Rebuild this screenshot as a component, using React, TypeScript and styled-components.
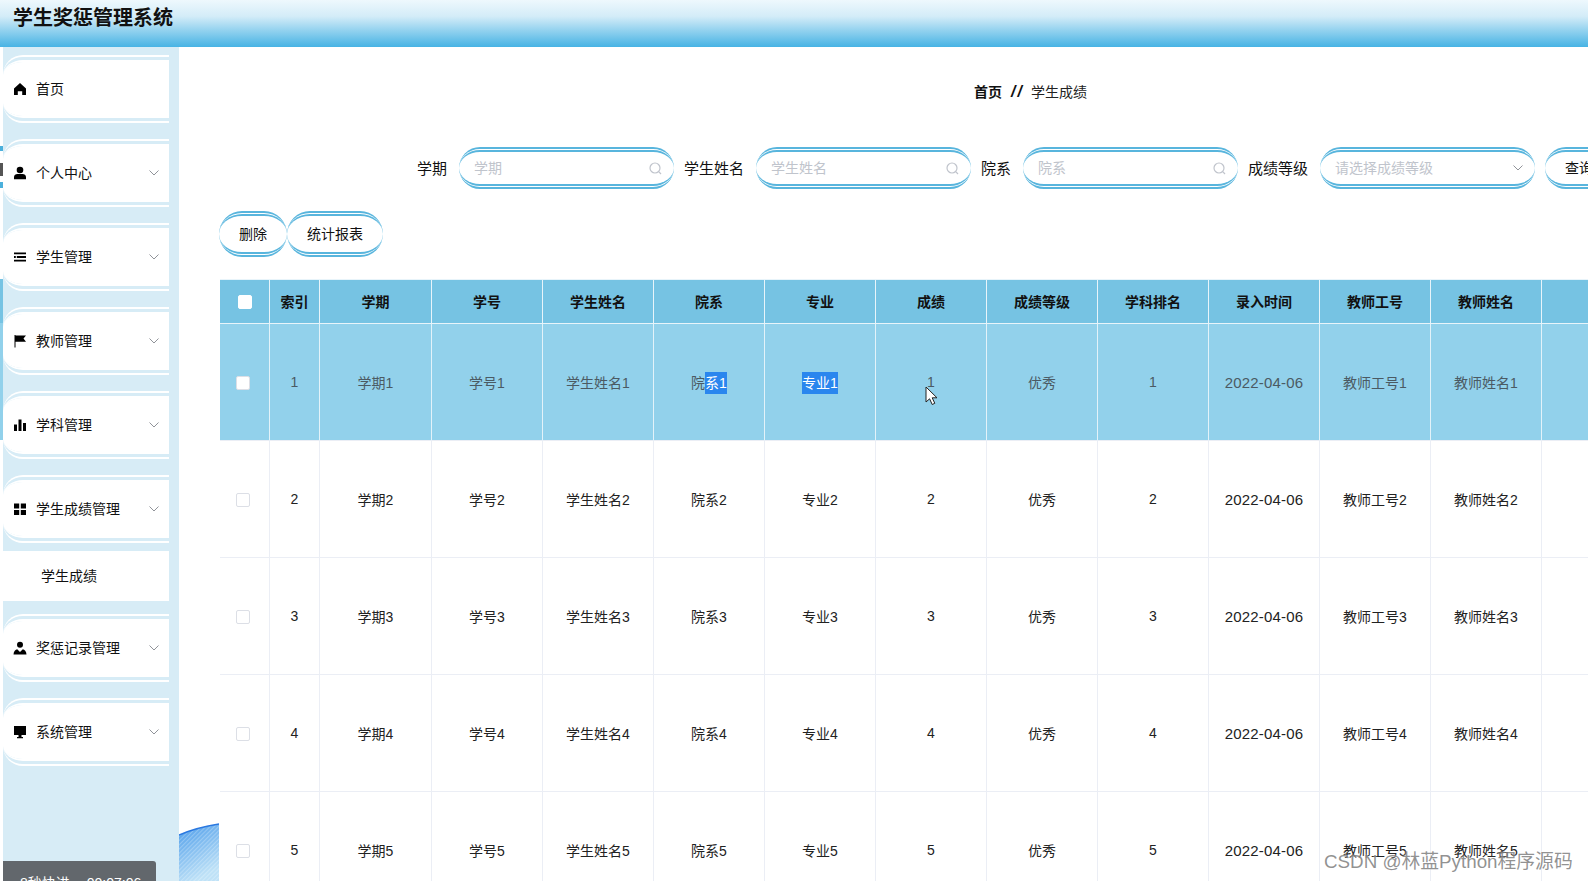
import React from "react";
import styled, { createGlobalStyle } from "styled-components";

const GlobalStyle = createGlobalStyle`
  html, body {
    margin: 0;
    padding: 0;
    background: #fff;
  }
  body {
    font-family: "Liberation Sans", "Noto Sans CJK SC", sans-serif;
    font-size: 14px;
    color: #000;
  }
  * {
    box-sizing: border-box;
  }
`;

const Page = styled.div`
  position: relative;
  display: flex;
  flex-direction: column;
  width: 1588px;
  height: 881px;
  overflow: hidden;
  background: #fff;
`;

const Header = styled.header`
  flex: none;
  height: 47px;
  padding: 0 13px;
  background: linear-gradient(180deg, #eef8fd 0%, #d3ecf8 35%, #47b3e4 100%);
`;

const Title = styled.div`
  font-size: 20px;
  line-height: 36px;
  font-weight: 700;
  color: #111;
`;

const Body = styled.div`
  flex: 1;
  display: flex;
  min-height: 0;
`;

const LeftStrip = styled.div`
  flex: none;
  width: 3px;
  display: flex;
  flex-direction: column;
`;

const Notch = styled.div<{ $h: number; $c: string }>`
  flex: none;
  height: ${(p) => p.$h}px;
  background: ${(p) => p.$c};
`;

const Sidebar = styled.aside`
  position: relative;
  flex: none;
  width: 176px;
  padding: 8px 10px 0 0;
  background: #d7ecf6;
`;

const MenuItem = styled.div`
  display: flex;
  align-items: center;
  height: 68px;
  margin-bottom: 16px;
  padding: 0 10px;
  background: #fff;
  background-clip: padding-box;
  border-style: double;
  border-color: #fff;
  border-width: 7px 0;
  border-radius: 20px 0 0 20px;
`;

const OpenItem = styled(MenuItem)`
  margin-bottom: 8px;
`;

const SubItem = styled.div`
  display: flex;
  align-items: center;
  height: 50px;
  margin-bottom: 13px;
  padding: 0 0 2px 38px;
  background: #fff;
  color: #111;
`;

const MenuIcon = styled.svg`
  flex: none;
  width: 14px;
  height: 14px;
  margin-right: 9px;
  fill: #000;
`;

const MenuLabel = styled.span`
  flex: 1;
  margin-top: -2px;
  font-size: 14px;
  color: #111;
`;

const Chevron = styled.svg`
  flex: none;
  width: 10px;
  height: 6px;
  fill: none;
  stroke: #909399;
  stroke-width: 1;
`;

const PlayerBar = styled.div`
  position: absolute;
  left: 0;
  bottom: 0;
  width: 153px;
  height: 20px;
  display: flex;
  gap: 17px;
  padding: 13px 0 0 17px;
  overflow: hidden;
  background: #62676c;
  border-radius: 0 3px 0 0;
  font-size: 14px;
  line-height: 18px;
  color: #fff;
`;

const Main = styled.main`
  position: relative;
  flex: none;
  width: 1702px;
  padding: 0 40px 0 41px;
`;

const Wave = styled.svg`
  position: absolute;
  left: 0;
  bottom: 0;
  width: 40px;
  height: 58px;
`;

const Breadcrumb = styled.nav`
  display: flex;
  justify-content: center;
  align-items: center;
  height: 22px;
  margin: 33px 0 0;
  font-size: 14px;
`;

const CrumbHome = styled.span`
  font-weight: 700;
  color: #111;
`;

const CrumbSep = styled.span`
  margin: 2px 7px 0 9px;
  font-size: 16px;
  line-height: 16px;
  font-weight: 700;
  font-style: italic;
  letter-spacing: 2px;
  color: #111;
`;

const CrumbCurrent = styled.span`
  color: #222;
`;

const SearchRow = styled.form`
  display: flex;
  align-items: center;
  margin: 45px 0 22px;
  padding-left: 197px;
`;

const FieldLabel = styled.label`
  flex: none;
  margin: -2px 12px 0 0;
  font-size: 15px;
  white-space: nowrap;
  color: #111;
`;

const Field = styled.div`
  flex: none;
  display: flex;
  align-items: center;
  width: 215px;
  height: 42px;
  margin-right: 10px;
  padding: 0 12px 0 15px;
  background: #fff;
  border-style: double;
  border-color: #58b5dd;
  border-width: 5px 0;
  border-radius: 21px;
`;

const FieldInput = styled.input`
  flex: 1;
  min-width: 0;
  padding: 0;
  border: 0;
  outline: 0;
  background: transparent;
  font-family: inherit;
  font-size: 14px;
  &::placeholder {
    color: #c0c4cc;
  }
`;

const FieldIcon = styled.svg`
  flex: none;
  width: 13px;
  height: 13px;
  fill: none;
  stroke: #c0c4cc;
  stroke-width: 1.2;
`;

const PillButton = styled.button`
  flex: none;
  height: 46px;
  padding: 0 20px 2px;
  background: #fff;
  border-style: double;
  border-color: #58b5dd;
  border-width: 5px 0;
  border-radius: 23px;
  font-family: inherit;
  font-size: 14px;
  color: #111;
  white-space: nowrap;
`;

const SearchButton = styled(PillButton)`
  height: 42px;
  border-radius: 21px;
`;

const Actions = styled.div`
  display: flex;
  margin-left: -1px;
`;

const Table = styled.table`
  margin-top: 22px;
  width: 1433px;
  table-layout: fixed;
  border-collapse: separate;
  border-spacing: 0;
`;

const HeadCell = styled.th`
  height: 45px;
  padding: 0 0 2px;
  background: #76c3e3;
  border-right: 1px solid #e8f4fa;
  border-bottom: 1px solid #e8f4fa;
  border-top: 1px solid #e8f4fa;
  font-size: 14px;
  font-weight: 700;
  color: #111;
`;

const Cell = styled.td<{ $selected?: boolean }>`
  height: 117px;
  padding: 0;
  text-align: center;
  background: ${(p) => (p.$selected ? "#92d1eb" : "#fff")};
  border-right: 1px solid ${(p) => (p.$selected ? "#e3f2f9" : "#ebeef5")};
  border-bottom: 1px solid #ebeef5;
  font-size: 14px;
  color: ${(p) => (p.$selected ? "#4b5a63" : "#222")};
`;

const DateText = styled.span`
  font-size: 15px;
  letter-spacing: 0.2px;
`;

const Selected = styled.span`
  padding: 3px 0;
  background: #2a86ee;
  color: #fff;
`;

const Check = styled.span<{ $head?: boolean }>`
  display: inline-block;
  width: 14px;
  height: 14px;
  vertical-align: middle;
  margin-left: ${(p) => (p.$head ? "0" : "-3px")};
  background: #fff;
  border: 1px solid ${(p) => (p.$head ? "#fff" : "#dcdfe6")};
  border-radius: 2px;
`;

const Cursor = styled.svg`
  position: absolute;
  left: 925px;
  top: 386px;
  width: 13px;
  height: 20px;
`;

const Watermark = styled.div`
  position: absolute;
  left: 1324px;
  top: 849px;
  font-size: 18.8px;
  line-height: 26px;
  white-space: nowrap;
  color: rgba(110, 110, 110, 0.75);
  text-shadow: 0 0 2px rgba(255, 255, 255, 0.8);
`;

const menus = [
  { label: "首页", icon: "home", arrow: false },
  { label: "个人中心", icon: "user", arrow: true },
  { label: "学生管理", icon: "list", arrow: true },
  { label: "教师管理", icon: "flag", arrow: true },
  { label: "学科管理", icon: "chart", arrow: true },
];

const icons: Record<string, React.ReactNode> = {
  home: <path d="M7 1 13 6.600V13H9.200V9.200H4.800V13H1V6.600Z" />,
  user: (
    <>
      <circle cx="7" cy="4" r="3.300" />
      <path d="M1 13.200V11c0-1.900 1.700-3 3.400-3h5.200c1.700 0 3.400 1.100 3.400 3v2.200Z" />
    </>
  ),
  list: <path d="M1 2.500h12v1.800H1ZM3.800 6.100H13v1.800H3.800ZM1 9.700h12v1.800H1ZM1 6.100h1.800v1.800H1Z" />,
  flag: <path d="M1.500 1h1v12.500h-1ZM2.500 1.500H13L10.500 4.500 13 7.800H2.500Z" />,
  chart: <path d="M1 6.500h3V13H1ZM5.500 1.500h3V13h-3ZM10 5h3v8h-3Z" />,
  grid: <path d="M1 1.500h5.200v5H1ZM7.800 1.500H13v5H7.800ZM1 8h5.200v5H1ZM7.800 8H13v5H7.800Z" />,
  custom: (
    <>
      <circle cx="7" cy="3.800" r="3" />
      <path d="M.5 13.500c.2-3.500 2-5 3.700-5.300L7 11l2.800-2.800c1.700.3 3.500 1.800 3.700 5.300Z" />
    </>
  ),
  monitor: <path d="M1 1h12v9H8.500v2H10v1.300H4V12h1.500v-2H1Z" />,
};

const Arrow = () => (
  <Chevron viewBox="0 0 10 6">
    <path d="M.5.500 5 5 9.500.500" />
  </Chevron>
);

const SearchIcon = () => (
  <FieldIcon viewBox="0 0 13 13">
    <circle cx="6" cy="6" r="5" />
    <path d="M9.700 9.700 12 12" />
  </FieldIcon>
);

const Menu = ({ label, icon, arrow }: { label: string; icon: string; arrow: boolean }) => (
  <MenuItem>
    <MenuIcon viewBox="0 0 14 14">{icons[icon]}</MenuIcon>
    <MenuLabel>{label}</MenuLabel>
    {arrow && <Arrow />}
  </MenuItem>
);

const columns = ["学期", "学号", "学生姓名", "院系", "专业", "成绩", "成绩等级", "学科排名", "录入时间", "教师工号", "教师姓名", ""];
const rows = [1, 2, 3, 4, 5];

const cellText = (n: number): React.ReactNode[] => [
  `学期${n}`,
  `学号${n}`,
  `学生姓名${n}`,
  `院系${n}`,
  `专业${n}`,
  `${n}`,
  "优秀",
  `${n}`,
  <DateText>2022-04-06</DateText>,
  `教师工号${n}`,
  `教师姓名${n}`,
  "",
];

const App = () => {
  return (
    <Page>
      <GlobalStyle />
      <Header>
        <Title>学生奖惩管理系统</Title>
      </Header>
      <Body>
        <LeftStrip>
          <Notch $h={99} $c="#fff" />
          <Notch $h={5} $c="#4bb0dc" />
          <Notch $h={12} $c="#fff" />
          <Notch $h={13} $c="#555" />
          <Notch $h={6} $c="#fff" />
          <Notch $h={6} $c="#4bb0dc" />
          <Notch $h={91} $c="#fff" />
          <Notch $h={44} $c="#76c3e3" />
          <Notch $h={117} $c="#92d1eb" />
        </LeftStrip>
        <Sidebar>
          {menus.map((m) => (
            <Menu key={m.label} {...m} />
          ))}
          <OpenItem>
            <MenuIcon viewBox="0 0 14 14">{icons.grid}</MenuIcon>
            <MenuLabel>学生成绩管理</MenuLabel>
            <Arrow />
          </OpenItem>
          <SubItem>学生成绩</SubItem>
          <Menu label="奖惩记录管理" icon="custom" arrow />
          <Menu label="系统管理" icon="monitor" arrow />
          <PlayerBar>
            <span>8秒快进</span>
            <span>00:07:06</span>
          </PlayerBar>
        </Sidebar>
        <Main>
          <Wave viewBox="0 0 40 58">
            <defs>
              <linearGradient id="waveFill" x1="0" y1="0" x2="0.4" y2="1">
                <stop offset="0" stopColor="#4a9bea" />
                <stop offset="1" stopColor="#bfe2f7" />
              </linearGradient>
              <pattern id="waveHatch" width="3" height="3" patternUnits="userSpaceOnUse" patternTransform="rotate(45)">
                <rect width="1" height="3" fill="#fff" fillOpacity="0.25" />
              </pattern>
            </defs>
            <path d="M0 12C14 6 27 3 40 1V58H0Z" fill="url(#waveFill)" />
            <path d="M0 12C14 6 27 3 40 1V58H0Z" fill="url(#waveHatch)" />
            <path d="M0 12C14 6 27 3 40 1" fill="none" stroke="#2a78e0" strokeWidth="1.500" />
          </Wave>
          <Breadcrumb>
            <CrumbHome>首页</CrumbHome>
            <CrumbSep>//</CrumbSep>
            <CrumbCurrent>学生成绩</CrumbCurrent>
          </Breadcrumb>
          <SearchRow>
            <FieldLabel>学期</FieldLabel>
            <Field>
              <FieldInput placeholder="学期" readOnly />
              <SearchIcon />
            </Field>
            <FieldLabel>学生姓名</FieldLabel>
            <Field>
              <FieldInput placeholder="学生姓名" readOnly />
              <SearchIcon />
            </Field>
            <FieldLabel>院系</FieldLabel>
            <Field>
              <FieldInput placeholder="院系" readOnly />
              <SearchIcon />
            </Field>
            <FieldLabel>成绩等级</FieldLabel>
            <Field>
              <FieldInput placeholder="请选择成绩等级" readOnly />
              <Arrow />
            </Field>
            <SearchButton type="button">查询</SearchButton>
          </SearchRow>
          <Actions>
            <PillButton type="button">删除</PillButton>
            <PillButton type="button">统计报表</PillButton>
          </Actions>
          <Table>
            <colgroup>
              <col style={{ width: 50 }} />
              <col style={{ width: 50 }} />
              {columns.map((c, i) => (
                <col key={i} style={{ width: i === 0 ? 112 : 111 }} />
              ))}
            </colgroup>
            <thead>
              <tr>
                <HeadCell>
                  <Check $head />
                </HeadCell>
                <HeadCell>索引</HeadCell>
                {columns.map((c, i) => (
                  <HeadCell key={i}>{c}</HeadCell>
                ))}
              </tr>
            </thead>
            <tbody>
              {rows.map((n) => {
                const sel = n === 1;
                return (
                  <tr key={n}>
                    <Cell $selected={sel}>
                      <Check />
                    </Cell>
                    <Cell $selected={sel}>{n}</Cell>
                    {cellText(n).map((t, i) => {
                      if (sel && i === 3) {
                        return (
                          <Cell key={i} $selected>
                            院<Selected>系1</Selected>
                          </Cell>
                        );
                      }
                      if (sel && i === 4) {
                        return (
                          <Cell key={i} $selected>
                            <Selected>专业1</Selected>
                          </Cell>
                        );
                      }
                      return (
                        <Cell key={i} $selected={sel}>
                          {t}
                        </Cell>
                      );
                    })}
                  </tr>
                );
              })}
            </tbody>
          </Table>
        </Main>
      </Body>
      <Cursor viewBox="0 0 13 20">
        <path d="M1 1V16L4.600 12.800 7.200 18.500 9.800 17.300 7.200 11.800H12Z" fill="#fff" stroke="#222" strokeWidth="1" />
      </Cursor>
      <Watermark>CSDN @林蓝Python程序源码</Watermark>
    </Page>
  );
};

export default App;
